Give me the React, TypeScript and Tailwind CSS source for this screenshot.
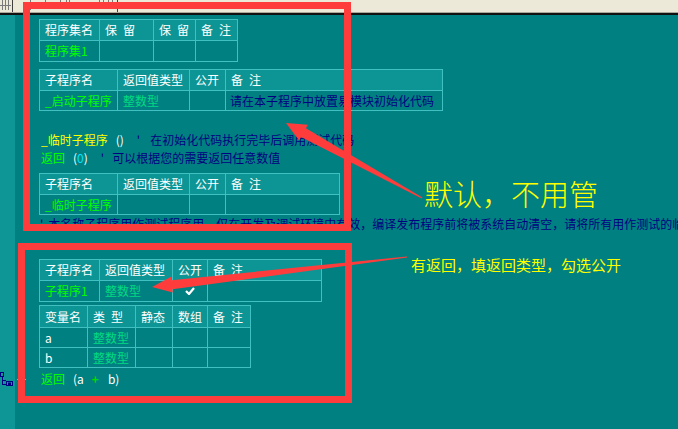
import React from "react";

type CellDef = { v?: React.ReactNode; c?: string };

function Table({
  cols,
  headers,
  rows,
  headH,
  rowH,
  className,
}: {
  cols: string;
  headers: string[];
  rows: CellDef[][];
  headH: string;
  rowH: string;
  className?: string;
}) {
  return (
    <div className={`grid w-fit gap-px border border-[#40c0c0] bg-[#40c0c0] ${cols} ${className ?? ""}`}>
      {headers.map((h, i) => (
        <div key={"h" + i} className={`${headH} flex items-center bg-[#0d9595] pl-[5px] text-white whitespace-pre`}>
          {h}
        </div>
      ))}
      {rows.flat().map((cell, i) => (
        <div
          key={"r" + i}
          className={`${rowH} flex items-center overflow-hidden whitespace-nowrap bg-[#008080] ${cell.c ?? "pl-[5px]"}`}
        >
          {cell.v}
        </div>
      ))}
    </div>
  );
}

const G = ({ children }: { children: React.ReactNode }) => <span className="text-[#00ff00]">{children}</span>;
const INT = () => <span className="text-[#00dc82]">整数型</span>;

function Check() {
  return (
    <svg width="10" height="8" viewBox="0 0 10 8">
      <polyline points="1,4 4,7 9,1" fill="none" stroke="#ffffff" strokeWidth="2.2" />
    </svg>
  );
}

function TopBar() {
  return (
    <div className="flex h-[15px] flex-col">
      <div className="h-[12px] bg-[#ece9d8]">
        <svg width="130" height="12" viewBox="0 0 130 12">
          <g stroke="#7a7a7a" strokeWidth="1">
            <line x1="0" y1="5.5" x2="11" y2="5.5" />
            <line x1="2.5" y1="0" x2="2.5" y2="10" />
            <line x1="5.5" y1="0" x2="5.5" y2="10" />
            <line x1="8.5" y1="0" x2="8.5" y2="10" />
            <line x1="26" y1="4.5" x2="34" y2="4.5" />
            <line x1="30.5" y1="0" x2="30.5" y2="10" />
            <line x1="45.5" y1="0" x2="45.5" y2="8" />
            <line x1="60.5" y1="0" x2="60.5" y2="9" />
            <line x1="66.5" y1="0" x2="66.5" y2="9" />
            <line x1="69.5" y1="0" x2="69.5" y2="9" />
            <line x1="60" y1="3.5" x2="70" y2="3.5" />
            <line x1="80" y1="2.5" x2="92" y2="2.5" />
            <line x1="81" y1="7.5" x2="91" y2="7.5" />
            <line x1="97" y1="4.5" x2="115" y2="4.5" />
            <line x1="99.5" y1="0" x2="99.5" y2="9" />
            <line x1="103.5" y1="0" x2="103.5" y2="9" />
            <line x1="108.5" y1="0" x2="108.5" y2="9" />
            <line x1="112.5" y1="0" x2="112.5" y2="9" />
          </g>
          <line x1="12.5" y1="0" x2="12.5" y2="12" stroke="#404040" />
          <line x1="117.5" y1="0" x2="117.5" y2="12" stroke="#404040" />
        </svg>
      </div>
      <div className="h-px bg-[#aca899]" />
      <div className="h-[2px] bg-[#111111]" />
    </div>
  );
}

function TreeIcon() {
  return (
    <svg width="14" height="15" viewBox="0 0 14 15">
      <g fill="none" stroke="#000080" strokeWidth="1">
        <rect x="0.5" y="0.5" width="3" height="4" />
        <line x1="2.5" y1="5" x2="2.5" y2="12.5" />
        <line x1="2" y1="8.5" x2="6" y2="8.5" />
        <line x1="2" y1="12.5" x2="6" y2="12.5" />
        <rect x="6.5" y="9.5" width="6" height="4" />
        <rect x="8.5" y="11" width="2" height="1.5" fill="#000080" />
      </g>
    </svg>
  );
}

export default function App() {
  return (
    <div className="relative h-[429px] w-[678px] overflow-hidden bg-[#008080] font-['Noto_Sans_CJK_SC','Noto_Sans',sans-serif] text-[12px] leading-none">
      <TopBar />
      <div className="flex h-[414px]">
        <div className="w-[15px] shrink-0 bg-[#0e9696] pt-[357px]">
          <TreeIcon />
        </div>
        <div className="flex min-w-0 flex-col items-start pl-[24px] pt-[4px]">
          <Table
            cols="grid-cols-[59px_53px_41px_41px]"
            headers={["程序集名", "保\u2002留", "保\u2002留", "备\u2002注"]}
            rows={[[{ v: <G>程序集1</G> }, {}, {}, {}]]}
            headH="h-[20px]"
            rowH="h-[20px]"
          />
          <Table
            className="mt-[7px]"
            cols="grid-cols-[77px_71px_35px_216px]"
            headers={["子程序名", "返回值类型", "公开", "备\u2002注"]}
            rows={[
              [
                { v: <G>_启动子程序</G> },
                { v: <INT /> },
                {},
                { v: <span className="text-[#000080]">请在本子程序中放置易模块初始化代码</span>, c: "pl-[4px]" },
              ],
            ]}
            headH="h-[20px]"
            rowH="h-[19px]"
          />

          <div className="mt-[20px] flex h-[18px] items-center whitespace-nowrap pl-[2px]">
            <span className="text-[#ffff00]">_临时子程序</span>
            <span className="ml-[8px] text-white">()</span>
            <span className="ml-[13px] text-[#000080]">'</span>
            <span className="ml-[10px] text-[#000080]">在初始化代码执行完毕后调用测试代码</span>
          </div>
          <div className="flex h-[18px] items-center whitespace-nowrap pl-[2px]">
            <span className="text-[#00ff00]">返回</span>
            <span className="ml-[8px] text-white">(</span>
            <span className="text-[#00e5ff]">0</span>
            <span className="text-white">)</span>
            <span className="ml-[13px] text-[#000080]">'</span>
            <span className="ml-[8px] text-[#000080]">可以根据您的需要返回任意数值</span>
          </div>

          <Table
            className="mt-[6px]"
            cols="grid-cols-[77px_71px_35px_113px]"
            headers={["子程序名", "返回值类型", "公开", "备\u2002注"]}
            rows={[[{ v: <G>_临时子程序</G> }, {}, {}, {}]]}
            headH="h-[20px]"
            rowH="h-[19px]"
          />
          <div className="flex h-[18px] items-center whitespace-nowrap pl-[1px] text-[#000080]">
            <span>'</span>
            <span className="ml-[5px]">
              本名称子程序用作测试程序用，仅在开发及调试环境中有效，编译发布程序前将被系统自动清空，请将所有用作测试的临时代码放入本子程序中。
            </span>
          </div>

          <Table
            className="mt-[26px]"
            cols="grid-cols-[59px_72px_34px_113px]"
            headers={["子程序名", "返回值类型", "公开", "备\u2002注"]}
            rows={[[{ v: <G>子程序1</G> }, { v: <INT /> }, { v: <Check />, c: "justify-center" }, {}]]}
            headH="h-[20px]"
            rowH="h-[20px]"
          />
          <Table
            className="mt-[3px]"
            cols="grid-cols-[47px_47px_36px_34px_42px]"
            headers={["变量名", "类\u2002型", "静态", "数组", "备\u2002注"]}
            rows={[
              [{ v: <span className="text-white">a</span> }, { v: <INT /> }, {}, {}, {}],
              [{ v: <span className="text-white">b</span> }, { v: <INT /> }, {}, {}, {}],
            ]}
            headH="h-[21px]"
            rowH="h-[19px]"
          />
          <div className="-ml-[22px] mt-[2px] flex h-[18px] items-center whitespace-nowrap">
            <span className="w-[9px] border-t border-dotted border-[#b8a878]" />
            <span className="ml-[15px] text-[#00ff00]">返回</span>
            <span className="ml-[8px] text-white">(a</span>
            <span className="ml-[8px] font-bold text-[#00dd00]">+</span>
            <span className="ml-[9px] text-white">b)</span>
          </div>
        </div>
      </div>

      <svg
        className="pointer-events-none absolute left-0 top-0"
        width="678"
        height="429"
        viewBox="0 0 678 429"
      >
        <rect x="26.5" y="5.5" width="321" height="222" fill="none" stroke="#ff3c3c" strokeWidth="7" />
        <rect x="21.5" y="246.5" width="327" height="153" fill="none" stroke="#ff3c3c" strokeWidth="7" />
        <polygon
          points="286,123 307.9,124.8 305.9,128.3 422.3,197.5 421.7,198.5 301.1,137.1 299.1,140.6"
          fill="#ff3c3c"
        />
        <polygon
          points="152,287 171,276.8 171.4,280.2 406.9,256.4 407.1,257.6 172.4,289.2 172.8,292.6"
          fill="#ff3c3c"
        />
      </svg>

      <div className="pointer-events-none absolute left-[424px] top-[178px] whitespace-nowrap text-[29px] font-light leading-[30px] text-[#ffff00]">
        默认，不用管
      </div>
      <div className="pointer-events-none absolute left-[411px] top-[257px] whitespace-nowrap text-[15px] leading-[16px] text-[#ffff00]">
        有返回，填返回类型，勾选公开
      </div>
    </div>
  );
}
